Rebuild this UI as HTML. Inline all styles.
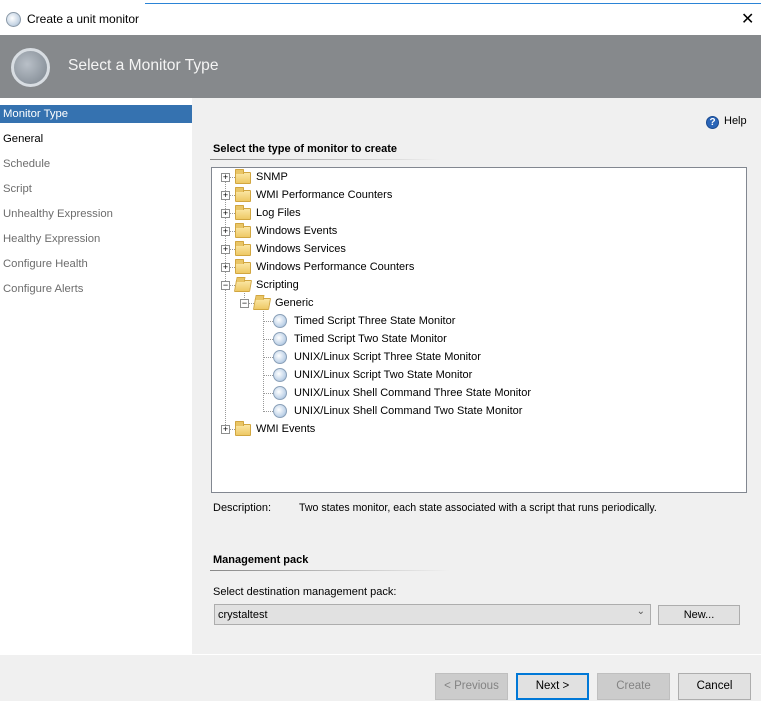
<!DOCTYPE html><html><head><style>
*{margin:0;padding:0;box-sizing:border-box}
body{width:761px;height:701px;overflow:hidden;background:#f0f0f0;font-family:"Liberation Sans",sans-serif;font-size:11px;color:#000;position:relative}
.a{position:absolute;white-space:nowrap}
.nav div{height:25px;line-height:18px;padding-left:3px;color:#6d6d6d;font-size:11.3px}
.fold{position:absolute;width:16px;height:12px;background:linear-gradient(#fbe6a4,#eec865);border:1px solid #d1a640;border-radius:1px}
.fold:before{content:"";position:absolute;left:-1px;top:-4px;width:7px;height:4px;background:#e9c566;border:1px solid #d1a640;border-bottom:none;border-radius:1px 1px 0 0}
.ex{position:absolute;width:9px;height:9px;border:1px solid #8e8f8f;background:#fff;font-size:9px;line-height:6px;text-align:center;color:#000}
.ln{position:absolute;border-top:1px dotted #999}
.vl{position:absolute;border-left:1px dotted #999}
.leaf{position:absolute;width:14px;height:14px;border-radius:50%;border:1px solid #8aa0b8;background:radial-gradient(circle at 40% 40%,#fff,#c4d6ea 60%,#8fb0d4)}
.btn{position:absolute;top:673px;height:27px;width:73px;border:1px solid #adadad;background:#e1e1e1;text-align:center;line-height:25px;font-size:11.5px}
</style></head><body>
<div class="a" style="left:0;top:0;width:761px;height:35px;background:#fff"></div>
<div class="a" style="left:145px;top:3px;width:616px;height:1px;background:#2b84d6"></div>
<div class="a" style="left:6px;top:12px;width:15px;height:15px;border-radius:50%;border:1px solid #8b9aa8;background:radial-gradient(circle at 40% 40%,#fff,#c9d7e6 60%,#93aac4)"></div>
<div class="a" style="left:27px;top:12px;font-size:12px">Create a unit monitor</div>
<div class="a" style="left:741px;top:9px;font-size:16px">✕</div>
<div class="a" style="left:0;top:35px;width:761px;height:63px;background:#86898c"></div>
<div class="a" style="left:11px;top:48px;width:39px;height:39px;border-radius:50%;border:3px solid #d8dde2;background:radial-gradient(circle at 40% 40%,#b9c0c8,#7b848d)"></div>
<div class="a" style="left:68px;top:57px;font-size:15.6px;color:#f4f4f4">Select a Monitor Type</div>
<div class="a" style="left:0;top:98px;width:192px;height:557px;background:#fff"></div>
<div class="a" style="left:0;top:105px;width:192px;height:18px;background:#3572b0"></div>
<div class="a nav" style="left:0;top:105px;width:192px">
<div style="color:#fff">Monitor Type</div><div style="color:#000">General</div><div>Schedule</div><div>Script</div><div>Unhealthy Expression</div><div>Healthy Expression</div><div>Configure Health</div><div>Configure Alerts</div></div>
<div class="a" style="left:706px;top:116px;width:13px;height:13px;border-radius:50%;background:#2a65b8;border:1px solid #1a4a90;color:#fff;font-size:10px;font-weight:bold;text-align:center;line-height:11px">?</div>
<div class="a" style="left:724px;top:115px">Help</div>
<div class="a" style="left:213px;top:143px;font-weight:bold">Select the type of monitor to create</div>
<div class="a" style="left:210px;top:159px;width:230px;height:1px;background:linear-gradient(90deg,#888,#f0f0f0)"></div>
<div class="a" style="left:211px;top:167px;width:536px;height:326px;background:#fff;border:1px solid #828790"></div>
<div class="vl" style="left:225px;top:181px;height:250px"></div>
<div class="vl" style="left:244px;top:290px;height:14px"></div>
<div class="vl" style="left:263px;top:308px;height:104px"></div>
<div id="tree"></div>
<div class="a" style="left:213px;top:502px">Description:</div>
<div class="a" style="left:299px;top:502px;font-size:10.6px">Two states monitor, each state associated with a script that runs periodically.</div>
<div class="a" style="left:213px;top:554px;font-weight:bold">Management pack</div>
<div class="a" style="left:210px;top:570px;width:240px;height:1px;background:linear-gradient(90deg,#888,#f0f0f0)"></div>
<div class="a" style="left:213px;top:586px">Select destination management pack:</div>
<div class="a" style="left:214px;top:604px;width:437px;height:21px;background:#e1e1e1;border:1px solid #adadad;padding:4px 3px;font-size:11px">crystaltest<span style="position:absolute;right:5px;top:1px;font-size:10px;color:#555">&#8964;</span></div>
<div class="a" style="left:658px;top:605px;width:82px;height:20px;background:#e1e1e1;border:1px solid #adadad;text-align:center;line-height:18px">New...</div>
<div class="a" style="left:0;top:654px;width:761px;height:1px;background:#fff"></div>
<div class="btn" style="left:435px;background:#cccccc;border-color:#bfbfbf;color:#838383">&lt; Previous</div>
<div class="btn" style="left:516px;border:2px solid #0078d7;line-height:23px">Next &gt;</div>
<div class="btn" style="left:597px;background:#cccccc;border-color:#bfbfbf;color:#838383">Create</div>
<div class="btn" style="left:678px">Cancel</div>
<script>
var t=document.getElementById('tree'),h='';
var f=["SNMP","WMI Performance Counters","Log Files","Windows Events","Windows Services","Windows Performance Counters"];
f.forEach(function(s,i){var c=177+i*18;h+='<div class="ex" style="left:221px;top:'+(c-4)+'px">+</div><div class="ln" style="left:230px;top:'+c+'px;width:5px"></div><div class="fold" style="left:235px;top:'+(c-5)+'px"></div><div class="a" style="left:256px;top:'+(c-6)+'px">'+s+'</div>';});
var c=285;h+='<div class="ex" style="left:221px;top:'+(c-4)+'px">−</div><div class="ln" style="left:230px;top:'+c+'px;width:5px"></div><div class="fold" style="left:235px;top:'+(c-5)+'px;transform:skewX(-10deg)"></div><div class="a" style="left:256px;top:'+(c-6)+'px">Scripting</div>';
c=303;h+='<div class="ex" style="left:240px;top:'+(c-4)+'px">−</div><div class="ln" style="left:249px;top:'+c+'px;width:5px"></div><div class="fold" style="left:254px;top:'+(c-5)+'px;transform:skewX(-10deg)"></div><div class="a" style="left:275px;top:'+(c-6)+'px">Generic</div>';
["Timed Script Three State Monitor","Timed Script Two State Monitor","UNIX/Linux Script Three State Monitor","UNIX/Linux Script Two State Monitor","UNIX/Linux Shell Command Three State Monitor","UNIX/Linux Shell Command Two State Monitor"].forEach(function(s,i){var c=321+i*18;h+='<div class="ln" style="left:264px;top:'+c+'px;width:9px"></div><div class="leaf" style="left:273px;top:'+(c-7)+'px"></div><div class="a" style="left:294px;top:'+(c-6)+'px">'+s+'</div>';});
c=429;h+='<div class="ex" style="left:221px;top:'+(c-4)+'px">+</div><div class="ln" style="left:230px;top:'+c+'px;width:5px"></div><div class="fold" style="left:235px;top:'+(c-5)+'px"></div><div class="a" style="left:256px;top:'+(c-6)+'px">WMI Events</div>';
t.innerHTML=h;
</script>
</body></html>
